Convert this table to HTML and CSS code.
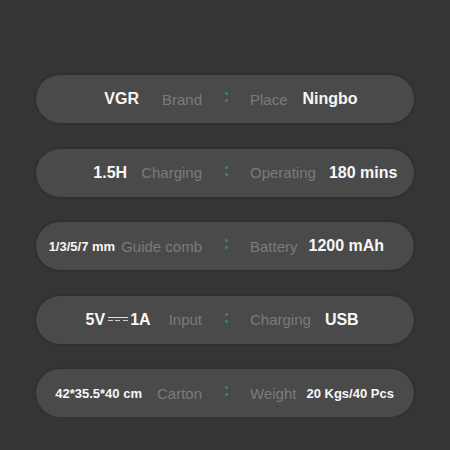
FILE: index.html
```html
<!DOCTYPE html>
<html>
<head>
<meta charset="utf-8">
<link rel="stylesheet" href="styles.css">
</head>
<body>
<div class="list">
  <div class="pill">
    <div class="side left"><span class="val">VGR</span><span class="label gl-23">Brand</span></div>
    <div class="colon"><i></i><i></i></div>
    <div class="side right"><span class="label">Place</span><span class="val gr-15">Ningbo</span></div>
  </div>
  <div class="pill">
    <div class="side left"><span class="val">1.5H</span><span class="label gl-14">Charging</span></div>
    <div class="colon"><i></i><i></i></div>
    <div class="side right"><span class="label">Operating</span><span class="val gr-13">180 mins</span></div>
  </div>
  <div class="pill">
    <div class="side left"><span class="val small">1/3/5/7 mm</span><span class="label gl-6">Guide comb</span></div>
    <div class="colon"><i></i><i></i></div>
    <div class="side right"><span class="label">Battery</span><span class="val gr-11">1200 mAh</span></div>
  </div>
  <div class="pill">
    <div class="side left"><span class="val">5V<span class="dc"></span>1A</span><span class="label gl-18">Input</span></div>
    <div class="colon"><i></i><i></i></div>
    <div class="side right"><span class="label">Charging</span><span class="val gr-14">USB</span></div>
  </div>
  <div class="pill">
    <div class="side left"><span class="val small">42*35.5*40 cm</span><span class="label gl-15">Carton</span></div>
    <div class="colon"><i></i><i></i></div>
    <div class="side right"><span class="label">Weight</span><span class="val small gr-10">20 Kgs/40 Pcs</span></div>
  </div>
</div>
</body>
</html>
```
FILE: styles.css
```css
html, body {
  margin: 0;
  padding: 0;
  background: #353535;
  font-family: "Liberation Sans", Arial, sans-serif;
}

.list {
  display: flex;
  flex-direction: column;
  gap: 25.5px;
  padding: 75px 36px 0 36px;
}

.pill {
  height: 48px;
  border-radius: 24px;
  background: #4a4a4a;
  box-shadow: 0 0 3px rgba(0, 0, 0, 0.35);
  display: grid;
  grid-template-columns: 166px auto 1fr;
  align-items: center;
}

.side {
  display: flex;
  align-items: center;
  white-space: nowrap;
}

.left {
  justify-content: flex-end;
}

.right {
  justify-content: flex-start;
}

.val {
  color: #f7f7f7;
  font-weight: bold;
  font-size: 16px;
  display: inline-flex;
  align-items: center;
}

.val.small {
  font-size: 13px;
}

.label {
  color: #7b7b7b;
  font-size: 15px;
}

.colon {
  display: flex;
  flex-direction: column;
  gap: 4px;
  margin: -4px 22px 0 23px;
}

.colon i {
  display: block;
  width: 3px;
  height: 3px;
  border-radius: 50%;
  background: #2c8b7b;
}

.dc {
  display: inline-block;
  width: 20px;
  height: 4px;
  margin: -1px 2px 0 3px;
  border-top: 1px solid #dcdcdc;
  box-sizing: border-box;
  background: repeating-linear-gradient(to right, #cfcfcf 0 5px, transparent 5px 7.5px) bottom / 100% 1px no-repeat;
}

.gl-23 { margin-left: 23px; }
.gl-18 { margin-left: 18px; }
.gl-15 { margin-left: 15px; }
.gl-14 { margin-left: 14px; }
.gl-6 { margin-left: 6px; }

.gr-15 { margin-left: 15px; }
.gr-14 { margin-left: 14px; }
.gr-13 { margin-left: 13px; }
.gr-11 { margin-left: 11px; }
.gr-10 { margin-left: 10px; }
```
